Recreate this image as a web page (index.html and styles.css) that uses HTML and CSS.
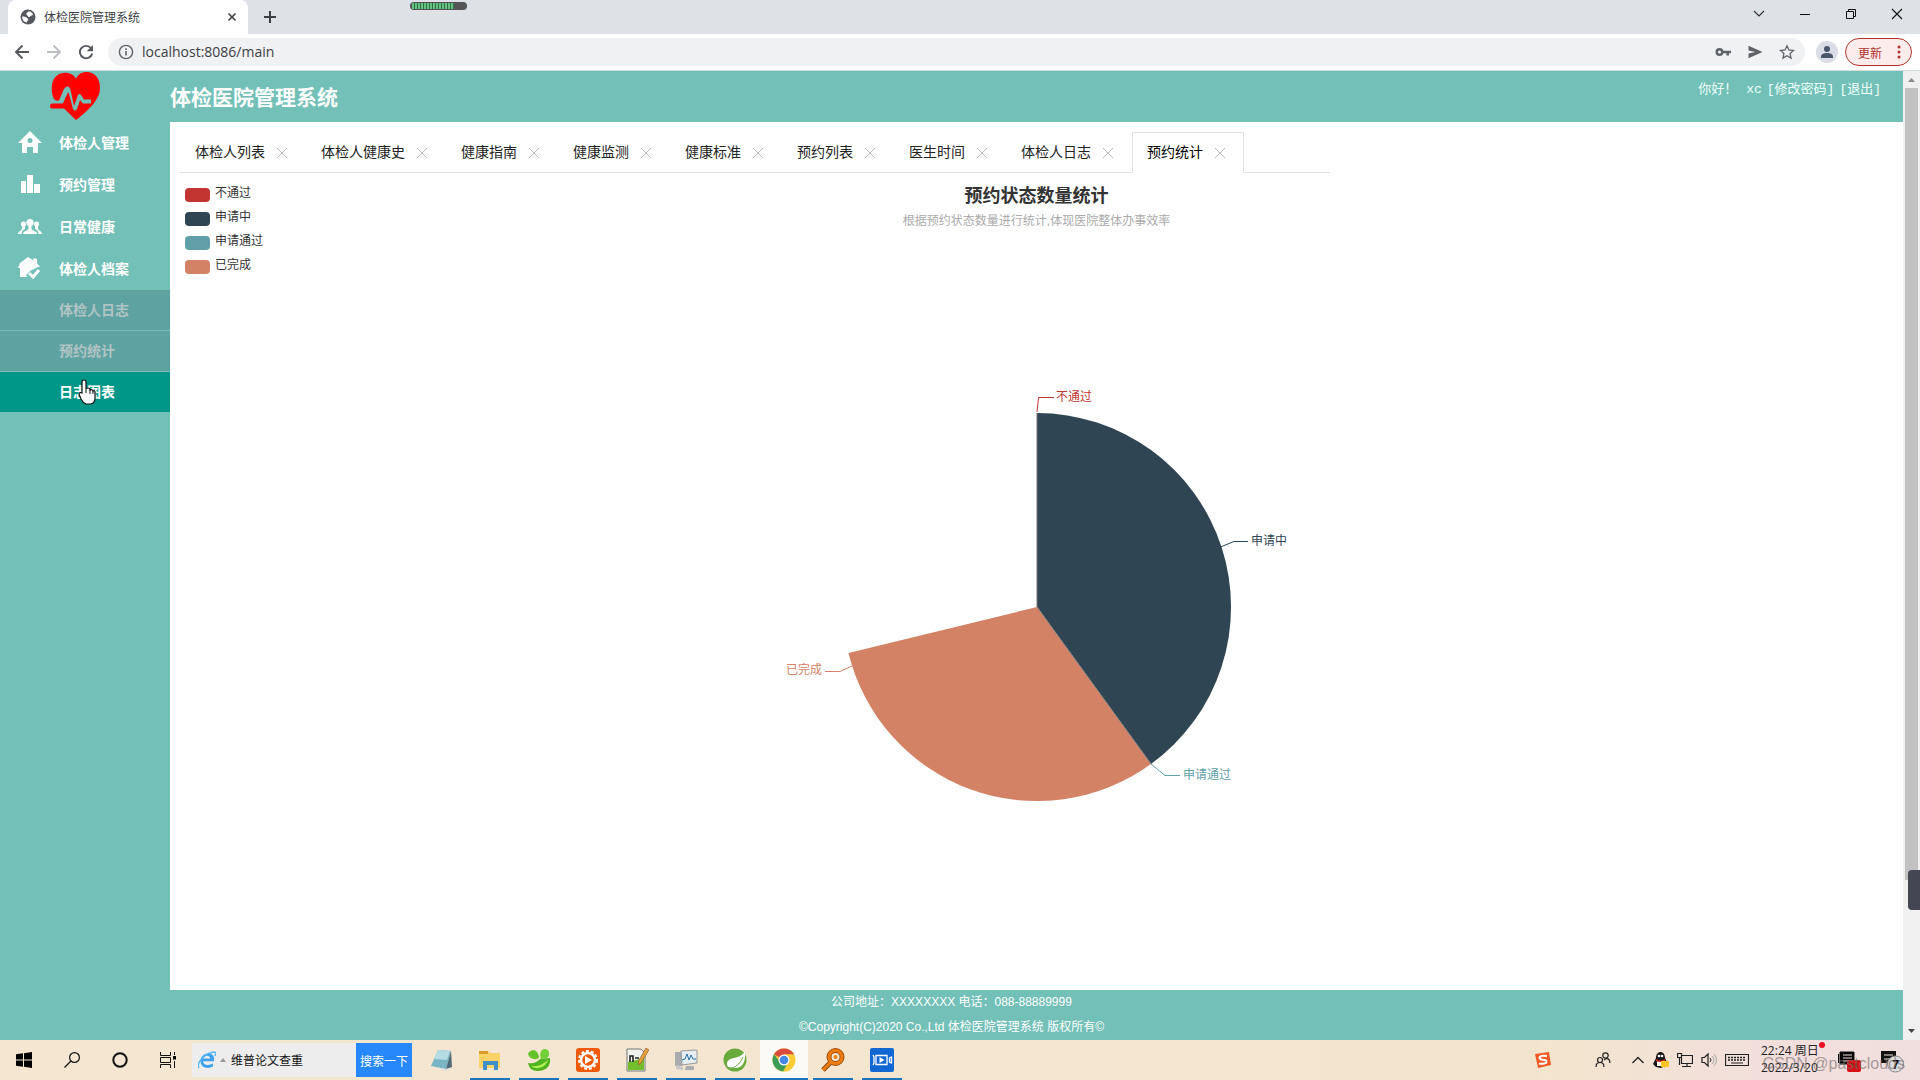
FILE: index.html
```html
<!DOCTYPE html>
<html lang="zh-CN">
<head>
<meta charset="utf-8">
<title>体检医院管理系统</title>
<link rel="stylesheet" href="styles.css">
</head>
<body>
<div class="tabstrip">
  <div class="browser-tab">
    <svg width="16" height="16" viewBox="0 0 16 16"><circle cx="8" cy="8" r="7.5" fill="#54585d"/><path d="M8.500 2.200c2 .2 4 1.500 4.700 3.600-1 .8-2.300.4-2.900 1.500-.5 1-2.300.6-2.600-.4C7.300 5.700 6 5.500 6.300 4.200 6.700 3.500 8.400 3.300 8.500 2.200zM2.200 7.500c1.700.1 3.800-.1 4.500 1.200.4 1 1.700.5 1.600 1.700-.3 1.200-1.600 1.300-1.500 3.100-2.800-.4-4.900-3-4.600-6z" fill="#fff"/></svg>
    <span class="browser-tab-title">体检医院管理系统</span>
    <button class="plain" aria-label="关闭标签页"><svg width="16" height="16" viewBox="0 0 16 16"><path d="M4.500 4.500l7 7m0-7l-7 7" stroke="#3c4043" stroke-width="1.600"/></svg></button>
  </div>
  <button class="plain new-tab" aria-label="新标签页"><svg width="16" height="16" viewBox="0 0 16 16"><path d="M8 2v12M2 8h12" stroke="#3c4043" stroke-width="2"/></svg></button>
  <div class="recorder"><span></span></div>
  <div class="window-buttons">
    <button class="plain" aria-label="搜索标签页"><svg width="14" height="14" viewBox="0 0 14 14"><path d="M2 4l5 5 5-5" fill="none" stroke="#333" stroke-width="1.200"/></svg></button>
    <button class="plain" aria-label="最小化"><svg width="14" height="14" viewBox="0 0 14 14"><path d="M2 7.500h10" stroke="#111"/></svg></button>
    <button class="plain" aria-label="还原"><svg width="14" height="14" viewBox="0 0 14 14"><path d="M2.500 4.500h7v7h-7zM4.500 4.500v-2h7v7h-2" fill="none" stroke="#111"/></svg></button>
    <button class="plain" aria-label="关闭"><svg width="14" height="14" viewBox="0 0 14 14"><path d="M2 2l10 10m0-10L2 12" stroke="#111" stroke-width="1.100"/></svg></button>
  </div>
</div>
<div class="toolbar">
  <div class="nav-buttons">
    <button class="plain" aria-label="后退"><svg width="16" height="16" viewBox="0 0 16 16"><path d="M15 8H2m6.500-6.500L2 8l6.500 6.500" fill="none" stroke="#54585d" stroke-width="1.900"/></svg></button>
    <button class="plain" aria-label="前进"><svg width="16" height="16" viewBox="0 0 16 16"><path d="M1 8h13M7.500 1.500L14 8l-6.500 6.500" fill="none" stroke="#bcbec1" stroke-width="1.900"/></svg></button>
    <button class="plain" aria-label="刷新"><svg width="16" height="16" viewBox="0 0 16 16"><path d="M13 4.200A6.200 6.200 0 1 0 14.200 9.500" fill="none" stroke="#54585d" stroke-width="1.900"/><path d="M15 1v6.300H8.700z" fill="#54585d"/></svg></button>
  </div>
  <div class="omnibox">
    <svg width="16" height="16" viewBox="0 0 16 16"><circle cx="8" cy="8" r="6.600" fill="none" stroke="#5f6368" stroke-width="1.400"/><path d="M8 7v4.500M8 4.300v1.600" stroke="#5f6368" stroke-width="1.600"/></svg>
    <input class="url" type="text" aria-label="地址" value="localhost:8086/main">
    <button class="plain" aria-label="密码"><svg width="16" height="16" viewBox="0 0 16 16"><circle cx="4.500" cy="8" r="2.800" fill="none" stroke="#5f6368" stroke-width="2.400"/><path d="M7.500 8H16M12.700 8v3.600" fill="none" stroke="#5f6368" stroke-width="2.600"/></svg></button>
    <button class="plain" aria-label="分享"><svg width="16" height="16" viewBox="0 0 16 16"><path d="M1.500 1.800L15.500 8l-14 6.200V9.600L8.500 8l-7-1.600z" fill="#5f6368"/></svg></button>
    <button class="plain" aria-label="收藏"><svg width="16" height="16" viewBox="0 0 16 16"><path d="M8 1.800l1.900 4.200 4.600.5-3.400 3.100.9 4.500-4-2.300-4 2.300.9-4.500L1.500 6.500 6.100 6z" fill="none" stroke="#5f6368" stroke-width="1.300"/></svg></button>
  </div>
  <button class="plain" aria-label="个人资料"><svg width="22" height="22" viewBox="0 0 22 22"><circle cx="11" cy="11" r="11" fill="#dadde6"/><circle cx="11" cy="8" r="3" fill="#4c566a"/><path d="M5 17v-1.500c0-2.500 3-3.500 6-3.500s6 1 6 3.500V17z" fill="#4c566a"/></svg></button>
  <button class="update">更新<svg width="4" height="14" viewBox="0 0 4 14"><circle cx="2" cy="2" r="1.500"/><circle cx="2" cy="7" r="1.500"/><circle cx="2" cy="12" r="1.500"/></svg></button>
</div>

<div class="viewport">
  <div class="app">
    <header class="app-header">
      <svg class="logo" width="50" height="48" viewBox="0 0 50 48"><path d="M26 7C22-2 4-2 2 13c-.6 6 0 10 2 14L26 48c9-7 24-19 24-32C50-3 30-4 26 7z" fill="red"/><path d="M0 28.500h9L13.500 18 Q15.500 14 18 14.500 20 15 21 20l3 14 4-11q1.500-2 3 0l3 4.500h7v4H33l-3-3.500-3 9q-2 3-4 0L19 22l-1-2-4 10-3 3H2z" fill="#72c0b8"/><path d="M0 34.500q0-3 2-3h11l3-7 2 9-3 3H2q-2 0-2-2z" fill="red"/></svg>
      <h1>体检医院管理系统</h1>
      <div class="account"><span>你好！</span><span class="user">xc</span><a href="#">[修改密码]</a><a href="#">[退出]</a></div>
    </header>
    <div class="app-body">
      <nav class="sidebar">
        <a href="#"><svg width="24" height="24" viewBox="0 0 24 24"><path fill-rule="evenodd" d="M12 1l12 12h-4v10h-5v-6H9v6H4V13H0zM12 8a2.500 2.500 0 1 0 0 5 2.500 2.500 0 0 0 0-5z"/></svg>体检人管理</a>
        <a href="#"><svg width="24" height="24" viewBox="0 0 24 24"><path d="M3 9h5v12H3zm6-6h6v18H9zm7 9h6v9h-6z"/></svg>预约管理</a>
        <a href="#"><svg width="24" height="24" viewBox="0 0 24 24"><circle cx="12" cy="8.500" r="3.600"/><circle cx="5.500" cy="10" r="2.600"/><circle cx="18.500" cy="10" r="2.600"/><path d="M5 20c0-3 4-3 5.500-5V11h3v4c1.500 2 5.500 2 5.500 5zM0 20c0-3 4-3 4-6v-3h3v4c-2 1-3.500 2-3.500 5zm24 0c0-3-4-3-4-6v-3h-3v4c2 1 3.500 2 3.500 5z"/></svg>日常健康</a>
        <a href="#"><svg width="24" height="24" viewBox="0 0 24 24"><path d="M10 1l5 3 1-2 3 1v4l3 4h-2l-8 4v6H2V12H0L2 7z"/><path d="M10 17l5 5 8-9" fill="none" stroke="#72c0b8" stroke-width="6"/><path d="M11 17l4 4 6-7" fill="none" stroke="#fff" stroke-width="3"/></svg>体检人档案</a>
        <a class="sub" href="#">体检人日志</a>
        <a class="sub" href="#">预约统计</a>
        <a class="sub current" href="#">日志图表
          <svg class="pointer" width="18" height="26" viewBox="0 0 18 26"><path d="M4 14V3q0-2 2-2t2 2v7q0-1 2-1t2 2q2-1 3 1 2-1 2 1v6q0 5-4 6H8q-3-1-5-5L1 15q0-2 3-1z" fill="#fff" stroke="#111" stroke-width="1.200"/><path d="M8 10v4m4-3v4m3-3v3" stroke="#111"/></svg>
        </a>
      </nav>
      <main class="panel">
        <div class="tabs">
          <div class="tab"><button class="plain name">体检人列表</button><button class="plain close" aria-label="关闭"></button></div>
          <div class="tab"><button class="plain name">体检人健康史</button><button class="plain close" aria-label="关闭"></button></div>
          <div class="tab"><button class="plain name">健康指南</button><button class="plain close" aria-label="关闭"></button></div>
          <div class="tab"><button class="plain name">健康监测</button><button class="plain close" aria-label="关闭"></button></div>
          <div class="tab"><button class="plain name">健康标准</button><button class="plain close" aria-label="关闭"></button></div>
          <div class="tab"><button class="plain name">预约列表</button><button class="plain close" aria-label="关闭"></button></div>
          <div class="tab"><button class="plain name">医生时间</button><button class="plain close" aria-label="关闭"></button></div>
          <div class="tab"><button class="plain name">体检人日志</button><button class="plain close" aria-label="关闭"></button></div>
          <div class="tab active"><button class="plain name">预约统计</button><button class="plain close" aria-label="关闭"></button></div>
        </div>
        <section class="chart">
          <div class="chart-head">
            <ul class="legend">
              <li><i class="rejected"></i>不通过</li>
              <li><i class="pending"></i>申请中</li>
              <li><i class="approved"></i>申请通过</li>
              <li><i class="done"></i>已完成</li>
            </ul>
            <div class="chart-title"><h2>预约状态数量统计</h2><p>根据预约状态数量进行统计,体现医院整体办事效率</p></div>
          </div>
          <svg class="pie" width="560" height="460" viewBox="0 0 560 460">
            <path d="M280 237V43A194 194 0 0 1 394 394z" fill="#2f4554"/>
            <path d="M280 237L394 394A194 194 0 0 1 91.500 283z" fill="#d48265"/>
            <path d="M280 237V43" stroke="#7d7080" fill="none"/>
            <path d="M280 237L394 394" stroke="#8a8580" fill="none"/>
            <g fill="none">
              <path d="M280 42l1.500-14.500H297" stroke="#c23531"/>
              <path d="M463.500 177l13.500-5.500h14" stroke="#2f4554"/>
              <path d="M394 394l14 11.500h15" stroke="#61a0a8"/>
              <path d="M95 296l-12 5.500H68" stroke="#d48265"/>
            </g>
            <text x="299" y="31" fill="#c23531">不通过</text>
            <text x="494" y="175" fill="#2f4554">申请中</text>
            <text x="426" y="409" fill="#61a0a8">申请通过</text>
            <text x="65" y="304" text-anchor="end" fill="#d48265">已完成</text>
          </svg>
        </section>
      </main>
    </div>
    <footer class="app-footer"><p>公司地址：XXXXXXXX 电话：088-88889999</p><p>©Copyright(C)2020 Co.,Ltd 体检医院管理系统 版权所有©</p></footer>
  </div>
  <div class="scrollbar">
    <svg width="17" height="17" viewBox="0 0 17 17"><path d="M5 11l3.500-4 3.500 4z" fill="#8a8a8a"/></svg>
    <div class="thumb"></div>
    <svg width="17" height="17" viewBox="0 0 17 17"><path d="M5 6l3.500 4L12 6z" fill="#444"/></svg>
    <div class="side-handle"></div>
  </div>
</div>

<div class="taskbar">
  <div class="task-system">
    <button class="plain" aria-label="开始"><svg width="16" height="16" viewBox="0 0 16 16"><path d="M0 2.300l7-1v6.200H0zM8 1.200L16 0v7.500H8zM0 8.500h7v6.200l-7-1zM8 8.500h8V16l-8-1.200z"/></svg></button>
    <button class="plain" aria-label="搜索"><svg width="16" height="16" viewBox="0 0 16 16"><circle cx="10.500" cy="5.500" r="4.900" fill="none" stroke="#111" stroke-width="1.200"/><path d="M7 9L.5 15.500" stroke="#111" stroke-width="1.300"/></svg></button>
    <button class="plain" aria-label="Cortana"><svg width="16" height="16" viewBox="0 0 16 16"><circle cx="8" cy="8" r="6.700" fill="none" stroke="#111" stroke-width="2"/></svg></button>
    <button class="plain" aria-label="任务视图"><svg width="16" height="16" viewBox="0 0 16 16"><path d="M.5 0v3.500h10V0M.5 16v-3.500h10V16M.5 5.500h10v5H.5zM14.500 0v3m0 6v7" fill="none" stroke="#111"/><path d="M13 4h3v3.500h-3z"/></svg></button>
  </div>
  <form class="task-search">
    <svg width="18" height="18" viewBox="0 0 18 18"><path d="M16 10.300H5c0 3.700 5.200 4.800 10 2.300v3c-5.500 3-12.500 1-12.500-5.500S12-1 15.700 5.500c.5 1.500.5 3 .3 4.800zM5.300 7.500h6.900C12 3.700 6 3.700 5.300 7.500z" fill="#3fa1ec"/><path d="M1 17C-2 12 7 2 16 1c2 0 2 2 1 4" fill="none" stroke="#57b4f4" stroke-width="1.500"/></svg>
    <svg width="6" height="6" viewBox="0 0 6 6"><path d="M0 5l3-4 3 4z" fill="#999"/></svg>
    <input type="text" aria-label="搜索内容" value="维普论文查重">
    <button type="button">搜索一下</button>
  </form>
  <div class="apps">
    <button class="app-icon" aria-label="记事本"><svg width="24" height="24" viewBox="0 0 24 24"><path d="M9 2l13 1-5 18-15-3z" fill="#79b5c5"/><path d="M9 2l12 1-3 9-13-1z" fill="#b6dce3"/><path d="M22 3l1 16-6 2z" fill="#516b76"/><path d="M1 18l16 3 5-1-5 3z" fill="#ddd"/></svg></button>
    <button class="app-icon open" aria-label="文件资源管理器"><svg width="24" height="24" viewBox="0 0 24 24"><path d="M1 3h9l2 2h10v15H1z" fill="#fbd267"/><path d="M1 3h9v3H1z" fill="#d79f28"/><path d="M5 13h15v9h-4v-5H9v5H5z" fill="#408fc6"/></svg></button>
    <button class="app-icon open" aria-label="浏览器"><svg width="24" height="24" viewBox="0 0 24 24"><path d="M2 4c5-4 9-1 10 5 0 3-8 3-10-1-1-1-1-3 0-4z" fill="#66c12b"/><path d="M14 11c-2-6 0-10 4-10s6 6 2 9z" fill="#72d037"/><path d="M1 15c6 1 9-1 12-4l10-1c1 8-4 13-12 13-6 0-9-3-10-8z" fill="#4fb41f"/><path d="M4 18c7 1 12-2 17-6-2 7-11 11-17 6z" fill="#b0ef56"/></svg></button>
    <button class="app-icon open" aria-label="截图工具"><svg width="24" height="24" viewBox="0 0 24 24"><rect width="24" height="24" rx="3" fill="#ef590a"/><circle cx="12" cy="12" r="9" fill="none" stroke="#fff" stroke-width="2" stroke-dasharray="3 2"/><circle cx="12" cy="12" r="7" fill="none" stroke="#fff" stroke-width="2.500"/><path d="M9 8l7 4-7 4z" fill="#fff"/></svg></button>
    <button class="app-icon open" aria-label="文本编辑器"><svg width="24" height="24" viewBox="0 0 24 24"><path d="M2 1h14l4 4v18H2z" fill="#f2f2ed" stroke="#777"/><path d="M3 14l16-4v12H3z" fill="#74bd2d"/><path d="M5 14V8h3v6m2-4h4" fill="none" stroke="#222" stroke-width="1.600"/><path d="M21 0l3 2-8 13-3 2 1-5z" fill="#e2a13c" stroke="#8b5325" stroke-width=".6"/></svg></button>
    <button class="app-icon open" aria-label="性能监视器"><svg width="24" height="24" viewBox="0 0 24 24"><path d="M1 4h7v14H1zM12 18h8v4h-9z" fill="#a9adb0"/><path d="M2 17l7 2v3l-7-1z" fill="#c8c8c8"/><path d="M7 3l16-1v13l-15 2z" fill="#e6eef2" stroke="#999"/><path d="M8 12l3-1 2-5 2 6 2-5 2 4h3" fill="none" stroke="#2570a6"/></svg></button>
    <button class="app-icon open" aria-label="Spring"><svg width="24" height="24" viewBox="0 0 24 24"><circle cx="12" cy="12" r="11.500" fill="#68aa3e"/><path d="M22 3c1 12-3 18-12 17-3 0-6-1-6-4 0-8 14-4 18-13z" fill="#fff"/><path d="M4 20c8 1 13-4 16-11" fill="none" stroke="#68aa3e"/></svg></button>
    <button class="app-icon open focused" aria-label="Chrome"><svg width="24" height="24" viewBox="0 0 24 24"><circle cx="12" cy="12" r="11.500" fill="#f9cc36"/><path d="M12 12L2 6.300A11.500 11.500 0 0 1 22 6.300H12z" fill="#d94b3e"/><path d="M2 6.300A11.500 11.500 0 0 0 11 23.500l5-9L12 12l-4 2z" fill="#3c9d57"/><circle cx="12" cy="12" r="5.500" fill="#fff"/><circle cx="12" cy="12" r="4.300" fill="#4688e8"/></svg></button>
    <button class="app-icon open" aria-label="搜索工具"><svg width="24" height="24" viewBox="0 0 24 24"><path d="M10 14l-8 8" stroke="#8a4a12" stroke-width="5"/><circle cx="14.500" cy="9" r="6.500" fill="none" stroke="#9b4d0c" stroke-width="5"/><circle cx="14.500" cy="9" r="6.500" fill="none" stroke="#ef7c13" stroke-width="3"/><path d="M10 14l-8 8" stroke="#ef7c13" stroke-width="3"/><circle cx="14.500" cy="9" r="2" fill="#ef7c13"/></svg></button>
    <button class="app-icon open" aria-label="录屏"><svg width="24" height="24" viewBox="0 0 24 24"><rect width="24" height="24" rx="2" fill="#1167d3"/><path d="M6 7.500h11v9H6zM3 7l1 2v6l-1 2M19.500 10l2-1v6l-2-1z" fill="none" stroke="#fff" stroke-width="1.300"/><path d="M9.500 9l5 3-5 3z" fill="#fff"/></svg></button>
  </div>
  <div class="tray">
    <svg class="sogou" width="16" height="16" viewBox="0 0 16 16"><path d="M0 2l14-2 2 13-13 3z" fill="#ef5a24"/><path d="M12 4Q5 3 4.500 5.500 5 8 8 7.700q4 0 3.500 2.500-1 2-7.500 1.500" fill="none" stroke="#fff" stroke-width="2"/></svg>
    <svg class="people" width="16" height="16" viewBox="0 0 16 16"><g fill="none" stroke="#222" stroke-width="1.200"><circle cx="10.500" cy="3.500" r="2.700"/><circle cx="5" cy="8" r="2.500"/><path d="M1 15c0-6 8-6 8 0M9 8c3-3 6-1 6 3"/></g></svg>
    <svg width="14" height="16" viewBox="0 0 14 16"><path d="M1.500 11L7 5.500l5.500 5.500" fill="none" stroke="#222" stroke-width="1.300"/></svg>
    <svg width="16" height="16" viewBox="0 0 16 16"><path d="M3 6C3-2 12-2 12 6l3 6-3 2-4 2-5-1-3-3z" fill="#171717"/><circle cx="6" cy="4" r="1.300" fill="#fff"/><circle cx="9" cy="4" r="1.300" fill="#fff"/><path d="M4 9c2 1 5 1 7 0v5H4z" fill="#fff"/><path d="M3 7q5 3 9 0v2q-5 2-9 0z" fill="#d82a1f"/><path d="M8 9h8v6h-3l-2 1v-1H8z" fill="#ffc526"/></svg>
    <svg width="16" height="16" viewBox="0 0 16 16"><path d="M4.500 3.500h11v8h-11zM10 12v2.500M5 14.500h9M.5 1.500h4v4h-4zM2.500 6v7" fill="none" stroke="#222" stroke-width="1.200"/></svg>
    <svg width="16" height="16" viewBox="0 0 16 16"><path d="M1 5.500h2.500L7 2v12l-3.500-3.500H1z" fill="none" stroke="#222" stroke-width="1.200"/><path d="M9 6q2 2 0 4" fill="none" stroke="#222"/><path d="M11 4q4 4 0 8m2-10q5 6 0 12" fill="none" stroke="#aaa"/></svg>
    <svg width="24" height="16" viewBox="0 0 24 16"><path d="M.5 2.500h23v11H.5z" fill="none" stroke="#222" stroke-width="1.200"/><path d="M3 5.500h18M3 8h18" stroke="#222" stroke-width="1.300" stroke-dasharray="2 1"/><path d="M6 11h12" stroke="#222"/></svg>
    <div class="clock"><span>22:24 周日</span><span>2022/3/20</span></div>
    <svg class="notes" width="24" height="24" viewBox="0 0 24 24"><path d="M2 4h14v12H2zM.5 6v9" stroke="#111"/><path d="M5 7h9m-9 3h9m-9 3h9" stroke="#f5e6e0"/><rect x="9" y="12" width="14" height="12" rx="2" fill="#d90f16"/><path d="M13 15l3 3m2-3v5" stroke="#520"/></svg>
    <svg class="action" width="24" height="26" viewBox="0 0 24 26"><path d="M1 4h15v12l-3 3v-3H1z" fill="#111"/><path d="M4 8h9m-9 4h9" stroke="#f5e6e0"/><circle cx="15.500" cy="17" r="8" fill="#ddd" stroke="#888"/><text x="12" y="22">7</text></svg>
    <span class="watermark">CSDN @pastclouds</span>
  </div>
</div>
</body>
</html>
```
FILE: styles.css
```css
* { box-sizing: border-box; }
body {
  margin: 0;
  min-height: 100vh;
  display: flex;
  flex-direction: column;
  font-family: "Liberation Sans", "Noto Sans CJK SC", sans-serif;
  font-size: 14px;
  color: #222;
  background: #fff;
}
h1, h2, p, ul { margin: 0; padding: 0; }
svg { display: block; flex: none; }
a { color: inherit; text-decoration: none; }
button, input { font: inherit; color: inherit; }
input { border: 0; background: none; padding: 0; min-width: 0; outline: 0; }
.plain { border: 0; padding: 0; background: none; }

/* browser frame */
.tabstrip { height: 34px; display: flex; align-items: center; background: #dee1e6; padding-left: 8px; position: relative; }
.browser-tab {
  width: 240px; height: 34px; padding: 0 8px 0 12px;
  display: flex; align-items: center; gap: 8px;
  background: #fff; border-radius: 8px 8px 0 0; font-size: 12px; color: #3c4043;
}
.browser-tab-title { flex: 1; padding-bottom: 2px; }
.new-tab { margin-left: 14px; }
.recorder {
  position: absolute; left: 410px; top: 2px; width: 57px; height: 8px;
  border-radius: 4px; background: #555; padding: 1px 2px;
}
.recorder span { display: block; width: 42px; height: 6px; background: repeating-linear-gradient(90deg, #64c47f 0 2px, #34704a 2px 3px); }
.window-buttons { margin-left: auto; display: flex; gap: 32px; padding-right: 16px; padding-bottom: 6px; }
.toolbar { height: 37px; display: flex; align-items: center; background: #fff; border-bottom: 1px solid #d5dfe0; padding-right: 8px; }
.nav-buttons { display: flex; gap: 16px; padding: 0 14px; }
.omnibox {
  flex: 1; height: 28px; border-radius: 14px; background: #f0f1f3;
  display: flex; align-items: center; gap: 16px; padding: 0 10px; margin-right: 11px;
}
.url { flex: 1; font-family: "Open Sans", sans-serif; font-size: 14px; color: #3c4043; margin-left: -8px; padding-bottom: 2px; }
.update {
  height: 28px; width: 67px; margin-left: 7px; padding: 0 10px 0 12px;
  display: flex; align-items: center; justify-content: space-between;
  border: 1px solid #b3312c; border-radius: 14px; background: #fcedec;
  font-size: 12px; color: #b3312c; fill: #b3312c;
}

/* application */
.viewport { flex: 1; display: flex; }
.app { flex: 1; display: flex; flex-direction: column; background: #72c0b8; }
.app-header { height: 51px; display: flex; color: #fff; padding-right: 22px; }
.logo { margin: 1px 70px 0 50px; }
.app-header h1 { font-size: 21px; line-height: 54px; }
.account { margin-left: auto; display: flex; gap: 5px; font-family: "Liberation Mono", "Noto Sans CJK SC", monospace; font-size: 13px; line-height: 38px; color: #effffb; }
.user { margin-left: 4px; }
.app-body { flex: 1; display: flex; }
.sidebar { width: 170px; flex: none; color: #fff; font-weight: bold; }
.sidebar a { display: flex; align-items: center; height: 42px; gap: 17px; padding: 0 0 2px 18px; }
.sidebar svg { fill: #fff; }
.sidebar .sub { position: relative; height: 41px; padding: 0 0 3px 59px; color: #b0c4c4; background: #5fa2a2; border-bottom: 1px solid #7bbcb8; }
.sidebar .current { height: 40px; color: #fff; background: #009688; border-bottom: 0; }
.pointer { position: absolute; left: 78px; top: 7px; }
.panel { flex: 1; background: #fff; padding-top: 10px; }
.tabs { display: flex; width: 1150px; max-width: 100%; height: 41px; margin-left: 10px; border-bottom: 1px solid #e2e2e2; }
.tab { display: flex; align-items: center; gap: 8px; height: 41px; padding: 0 15px; }
.tab.active { border: 1px solid #e2e2e2; border-bottom-color: #fff; padding: 0 14px; color: #000; }
.name { padding-bottom: 3px; }
.close { width: 18px; height: 18px; }
.close::before {
  content: ""; display: block; width: 10px; height: 10px; margin: 0 auto;
  background:
    linear-gradient(45deg, transparent 46%, #bbb 46% 54%, transparent 54%),
    linear-gradient(135deg, transparent 46%, #bbb 46% 54%, transparent 54%);
}
.chart { padding: 10px 15px 0; }
.chart-head { display: grid; grid-template-columns: 1fr auto 1fr; }
.legend { list-style: none; font-size: 12px; line-height: 20px; color: #333; }
.legend li { display: flex; height: 24px; gap: 5px; }
.legend i { width: 25px; height: 14px; margin-top: 5px; border-radius: 4px; }
.rejected { background: #c23531; }
.pending { background: #2f4554; }
.approved { background: #61a0a8; }
.done { background: #d48265; }
.chart-title { text-align: center; }
.chart-title h2 { font-size: 18px; line-height: 27px; color: #333; }
.chart-title p { font-size: 12px; line-height: 22px; color: #aaa; }
.pie { margin: 91px auto 0; font-size: 12px; }
.app-footer { height: 50px; text-align: center; font-size: 12px; line-height: 25px; color: #fff; }

.scrollbar { position: relative; width: 17px; display: flex; flex-direction: column; background: #f0f0f0; }
.thumb { flex: 1; width: 13px; margin: 0 auto 143px; background: #c1c1c1; }
.side-handle { position: absolute; right: 0; bottom: 130px; width: 12px; height: 40px; border-radius: 4px 0 0 4px; background: #454653; }

/* desktop taskbar */
.taskbar { height: 40px; display: flex; align-items: center; background: linear-gradient(90deg, #f4e6d1, #f3e5cd 80%, #f2dfdc 92%, #f1dfdf); }
.task-system { display: flex; gap: 32px; padding: 0 16px; }
.task-search { width: 220px; height: 34px; display: flex; align-items: center; gap: 4px; padding-left: 6px; background: #ededed; font-size: 12px; color: #111; }
.task-search input { flex: 1; margin-left: 1px; padding-bottom: 2px; }
.task-search button { width: 56px; height: 34px; padding: 0; border: 0; background: #2688fa; color: #fff; }
.apps { display: flex; gap: 1px; padding-left: 5px; }
.app-icon { width: 48px; height: 40px; padding: 0 12px; border: 0; background: none; }
.open { background: linear-gradient(#1b75bc, #1b75bc) center bottom / 40px 2px no-repeat; }
.focused { background: linear-gradient(#1b75bc, #1b75bc) center bottom / 48px 2px no-repeat #fcfaf7; }
.tray { position: relative; margin-left: auto; display: flex; align-items: center; gap: 8px; padding-right: 16px; }
.sogou { margin-right: 36px; }
.people { margin-right: 12px; }
.clock { position: relative; display: flex; flex-direction: column; width: 65px; margin-left: 4px; padding-bottom: 2px; font-family: "Open Sans", "Noto Sans CJK SC", sans-serif; font-size: 12px; line-height: 17px; color: #222; white-space: nowrap; }
.clock::after { content: ""; position: absolute; right: 1px; top: 0; width: 6px; height: 6px; border-radius: 3px; background: #e81123; }
.notes { margin-left: 4px; }
.action { margin-left: 10px; font-size: 13px; font-weight: bold; }
.watermark { position: absolute; right: 15px; bottom: 2px; font-size: 16px; line-height: 24px; color: rgba(120, 110, 110, .65); white-space: nowrap; }
```
